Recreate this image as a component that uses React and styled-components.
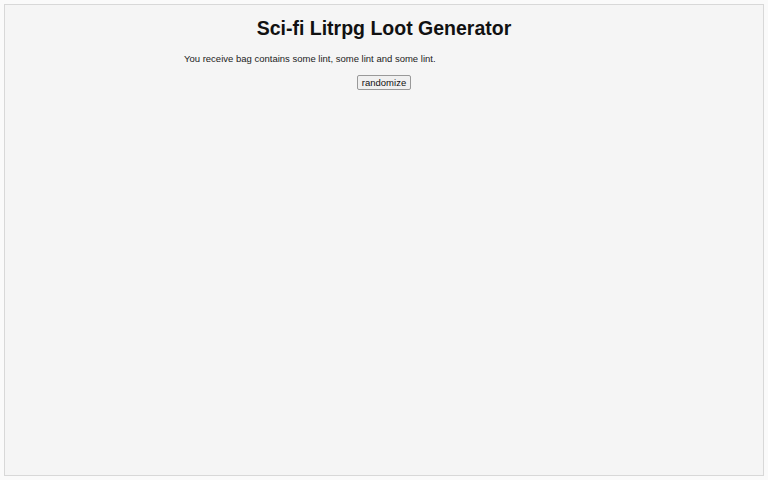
import React, { useState } from "react";
import styled, { createGlobalStyle } from "styled-components";

const Global = createGlobalStyle`
  html, body { margin: 0; padding: 0; background: #fafafa; }
  body { padding: 4px; font-family: "Liberation Sans", Arial, sans-serif; color: #111; }
`;

const Frame = styled.div`
  box-sizing: border-box;
  height: 472px;
  border: 1px solid #d8d8d8;
  background: #f5f5f5;
  display: flex;
  flex-direction: column;
  align-items: center;
  padding-top: 11px;
`;

const Title = styled.h1`
  margin: 0 0 13px;
  font-size: 19.5px;
  font-weight: bold;
  line-height: 24px;
  color: #111;
`;

const Column = styled.div`
  width: 400px;
  display: flex;
  flex-direction: column;
  align-items: center;
`;

const Result = styled.p`
  align-self: stretch;
  margin: 0 0 10px;
  font-size: 9.5px;
  line-height: 12px;
  color: #222;
`;

const Button = styled.button`
  font-family: "Liberation Sans", Arial, sans-serif;
  font-size: 9.5px;
  padding: 1px 4px;
  background: #f0f0f0;
  border: 1px solid #999;
  border-radius: 2px;
  color: #111;
`;

const items = ["some lint", "some lint", "some lint"];

export default function App() {
  const [loot] = useState(items);
  return (
    <>
      <Global />
      <Frame>
        <Title>Sci-fi Litrpg Loot Generator</Title>
        <Column>
          <Result>
            You receive bag contains {loot[0]}, {loot[1]} and {loot[2]}.
          </Result>
          <Button>randomize</Button>
        </Column>
      </Frame>
    </>
  );
}
